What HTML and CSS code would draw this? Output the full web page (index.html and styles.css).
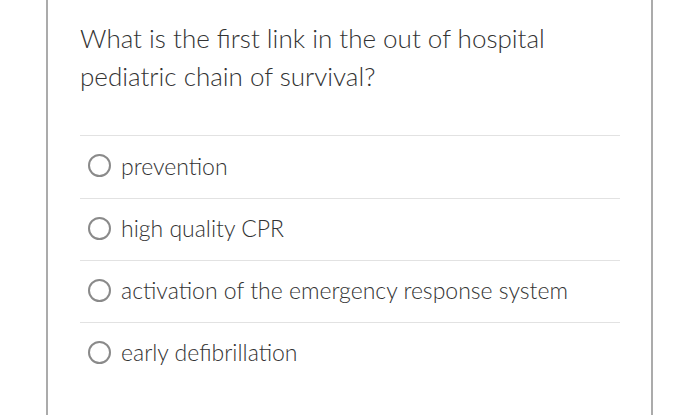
FILE: index.html
```html
<!DOCTYPE html>
<html>
<head>
<meta charset="utf-8">
<link rel="stylesheet" href="styles.css">
</head>
<body>
<div class="card">
  <div class="question">What is the ﬁrst link in the out of hospital pediatric chain of survival?</div>
  <div class="answers">
    <label class="answer first"><span class="radio"></span><span class="text">prevention</span></label>
    <label class="answer"><span class="radio"></span><span class="text">high quality CPR</span></label>
    <label class="answer"><span class="radio"></span><span class="text">activation of the emergency response system</span></label>
    <label class="answer last"><span class="radio"></span><span class="text">early deﬁbrillation</span></label>
  </div>
</div>
</body>
</html>
```
FILE: styles.css
```css
html, body {
  margin: 0;
  padding: 0;
  background: #fff;
}
body {
  font-family: Lato, "Open Sans", sans-serif;
  font-weight: 300;
  color: #333;
}
.card {
  margin-left: 46px;
  width: 607px;
  min-height: 415px;
  border-left: 2px solid #ababab;
  border-right: 2px solid #ababab;
  padding: 19px 0 0 32px;
  box-sizing: border-box;
}
.question {
  font-size: 26px;
  line-height: 38px;
  width: 520px;
  margin-bottom: 40px;
}
.answers {
  width: 540px;
}
.answer {
  display: flex;
  align-items: center;
  border-top: 1px solid #e2e2e2;
  padding-bottom: 3px;
  box-sizing: border-box;
  height: 62px;
}
.answer.first {
  height: 63px;
}
.radio {
  width: 19px;
  height: 19px;
  border: 2px solid #8a8a8a;
  border-radius: 50%;
  margin-left: 8px;
  margin-right: 10px;
  flex: none;
}
.text {
  font-size: 23px;
}
```
